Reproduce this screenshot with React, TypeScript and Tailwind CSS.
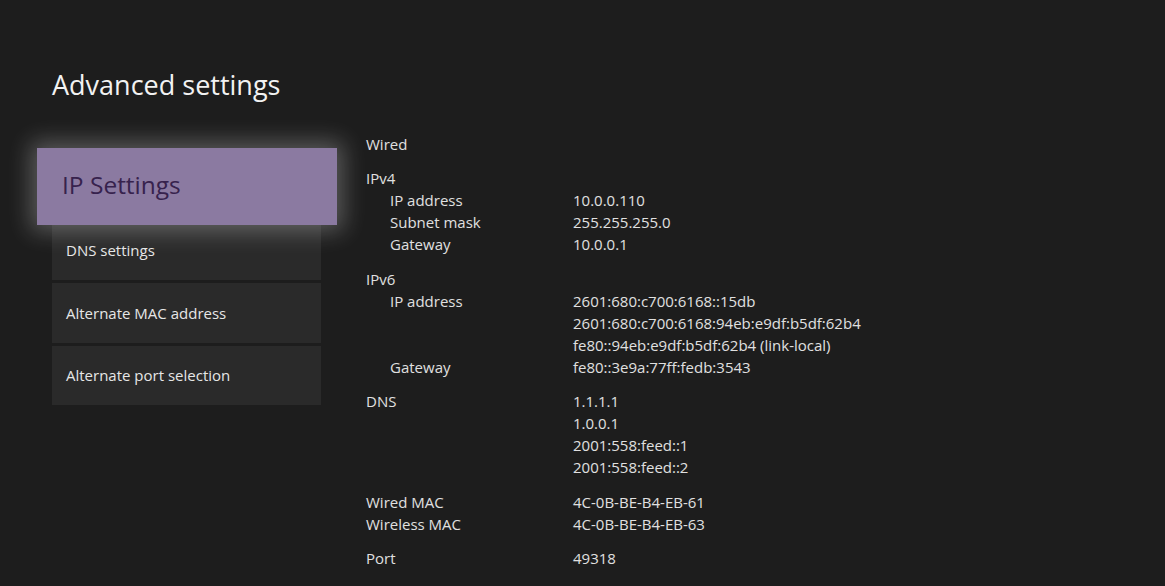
import React from "react";

type Row = { label: string; value?: string; indent?: boolean };

const groups: { gap: string; rows: Row[] }[] = [
  { gap: "mt-0", rows: [{ label: "Wired" }] },
  {
    gap: "mt-[12px]",
    rows: [
      { label: "IPv4" },
      { label: "IP address", value: "10.0.0.110", indent: true },
      { label: "Subnet mask", value: "255.255.255.0", indent: true },
      { label: "Gateway", value: "10.0.0.1", indent: true },
    ],
  },
  {
    gap: "mt-[13px]",
    rows: [
      { label: "IPv6" },
      { label: "IP address", value: "2601:680:c700:6168::15db", indent: true },
      { label: "", value: "2601:680:c700:6168:94eb:e9df:b5df:62b4", indent: true },
      { label: "", value: "fe80::94eb:e9df:b5df:62b4 (link-local)", indent: true },
      { label: "Gateway", value: "fe80::3e9a:77ff:fedb:3543", indent: true },
    ],
  },
  {
    gap: "mt-[12px]",
    rows: [
      { label: "DNS", value: "1.1.1.1" },
      { label: "", value: "1.0.0.1" },
      { label: "", value: "2001:558:feed::1" },
      { label: "", value: "2001:558:feed::2" },
    ],
  },
  {
    gap: "mt-[13px]",
    rows: [
      { label: "Wired MAC", value: "4C-0B-BE-B4-EB-61" },
      { label: "Wireless MAC", value: "4C-0B-BE-B4-EB-63" },
    ],
  },
  { gap: "mt-[12px]", rows: [{ label: "Port", value: "49318" }] },
];

export default function App() {
  return (
    <div
      className="w-[1165px] h-[586px] bg-[#1d1d1d] overflow-hidden"
      style={{ fontFamily: '"Open Sans", "Noto Sans", sans-serif' }}
    >
      <div className="pl-[52px] pt-[67px] text-[27px] leading-[36px] text-[#f2f2f2]">
        Advanced settings
      </div>
      <div className="flex items-start mt-[30px]">
        <div className="ml-[52px] w-[269px] mt-[15px] flex flex-col">
          <div className="relative z-10 -mx-[15px] w-[300px] h-[77px] -mb-[4px] bg-[#8b7aa1] shadow-[0_0_22px_6px_rgba(255,255,255,0.28)] flex items-center pl-[25px] pb-[2px] text-[24.5px] font-medium text-[#37224d]">
            IP Settings
          </div>
          <div className="h-[59px] bg-[#2a2a2a] flex items-center pl-[14px] text-[15px] text-[#e6e6e6]">
            DNS settings
          </div>
          <div className="mt-[3px] h-[60px] bg-[#2a2a2a] flex items-center pl-[14px] text-[15px] text-[#e6e6e6]">
            Alternate MAC address
          </div>
          <div className="mt-[3px] h-[59px] bg-[#2a2a2a] flex items-center pl-[14px] text-[15px] text-[#e6e6e6]">
            Alternate port selection
          </div>
        </div>
        <div className="ml-[45px] flex flex-col text-[15px] leading-[22px] text-[#e0e0e0]">
          {groups.map((g, gi) => (
            <div key={gi} className={g.gap}>
              {g.rows.map((r, ri) => (
                <div key={ri} className="flex h-[22px]">
                  <div className={"w-[207px] " + (r.indent ? "pl-[24px]" : "")}>{r.label}</div>
                  <div>{r.value ?? ""}</div>
                </div>
              ))}
            </div>
          ))}
        </div>
      </div>
    </div>
  );
}
